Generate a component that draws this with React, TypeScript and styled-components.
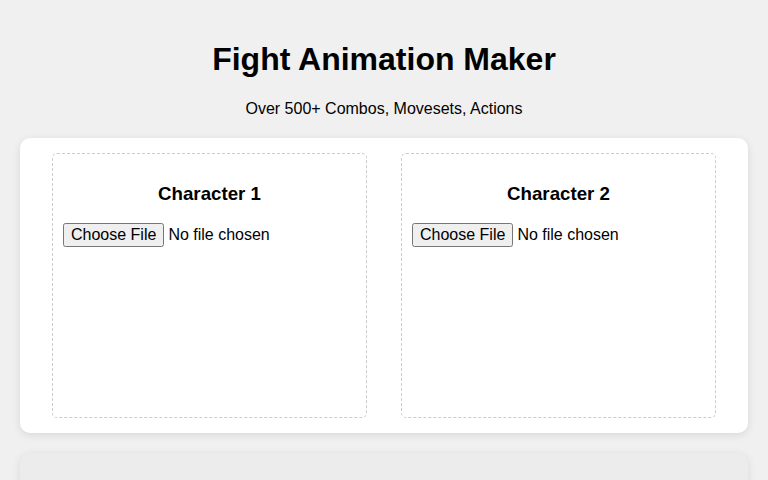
import React from "react";
import styled, { createGlobalStyle } from "styled-components";

const Global = createGlobalStyle`
  html, body { margin: 0; padding: 0; }
  body {
    background: #f0f0f0;
    font-family: "Liberation Sans", Arial, sans-serif;
    color: #000;
    padding: 20px;
  }
`;

const Title = styled.h1`
  text-align: center;
  font-size: 32px;
  font-weight: bold;
  margin: 21.44px 0;
`;

const Subtitle = styled.p`
  text-align: center;
  font-size: 16px;
  margin: 16px 0;
`;

const Card = styled.section<{ $muted?: boolean }>`
  background: ${(p) => (p.$muted ? "#ececec" : "#fff")};
  border-radius: 10px;
  box-shadow: 0 2px 8px rgba(0, 0, 0, 0.1);
  margin: 20px 0;
  padding: 15px 32px;
  min-height: ${(p) => (p.$muted ? "120px" : "auto")};
`;

const Row = styled.div`
  display: grid;
  grid-template-columns: repeat(2, minmax(0, 1fr));
  gap: 34px;
`;

const Panel = styled.div`
  box-sizing: border-box;
  min-width: 0;
  height: 265px;
  border: 1px dashed #ccc;
  border-radius: 5px;
  padding: 10px;
`;

const PanelTitle = styled.h3`
  text-align: center;
  font-size: 18.72px;
  font-weight: bold;
  margin: 18.72px 0;
`;

const FileInput = styled.input`
  font: inherit;
  font-size: 16px;
  max-width: 100%;
`;

export default function App() {
  return (
    <>
      <Global />
      <Title>Fight Animation Maker</Title>
      <Subtitle>Over 500+ Combos, Movesets, Actions</Subtitle>
      <Card>
        <Row>
          {[1, 2].map((n) => (
            <Panel key={n}>
              <PanelTitle>Character {n}</PanelTitle>
              <FileInput type="file" accept="image/*" />
            </Panel>
          ))}
        </Row>
      </Card>
      <Card $muted />
    </>
  );
}
